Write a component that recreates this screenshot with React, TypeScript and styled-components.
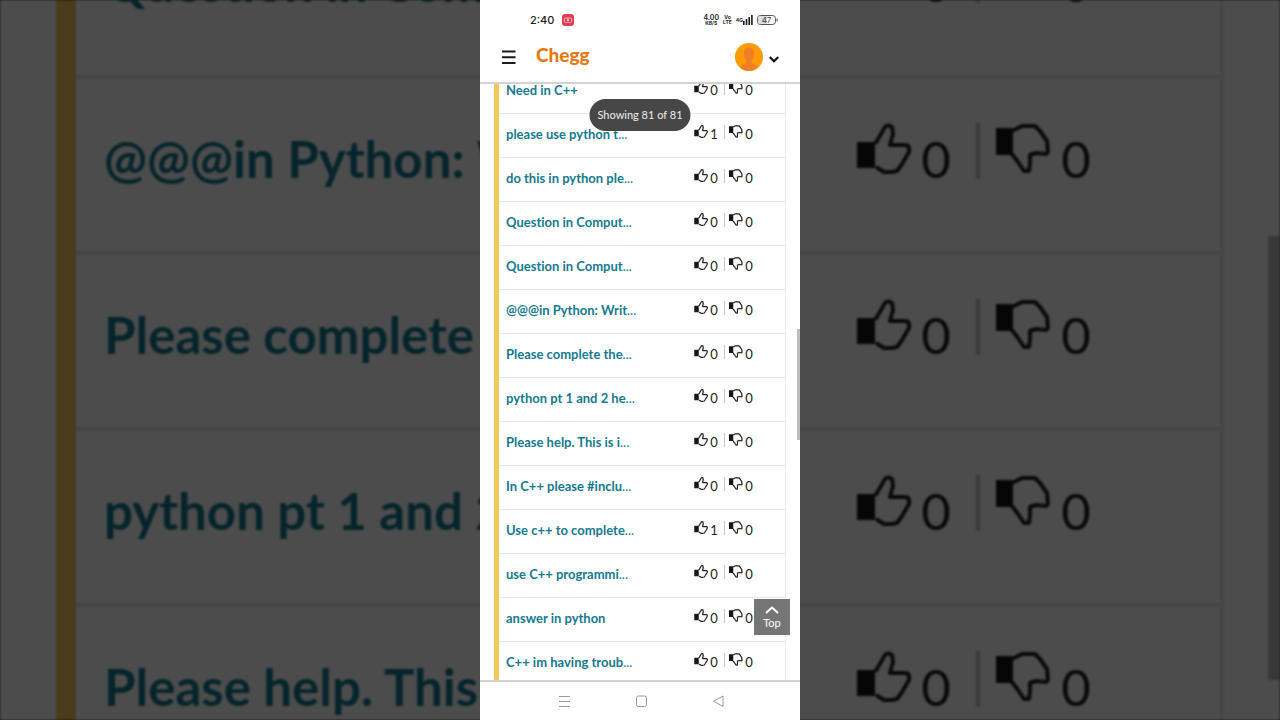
import React from "react";
import styled, { createGlobalStyle } from "styled-components";

const GlobalStyle = createGlobalStyle`
  *, *::before, *::after { box-sizing: border-box; }
  body { margin: 0; background: #4c4c4c; font-family: Lato, "Liberation Sans", sans-serif; font-variant-ligatures: none; }
  button { margin: 0; padding: 0; border: 0; background: none; color: inherit; font: inherit; cursor: pointer; }
  ul { margin: 0; padding: 0; list-style: none; }
  svg { display: block; flex: none; }
`;

type Scale = { $s: number };

const Stage = styled.div`
  position: relative;
  display: flex;
  justify-content: center;
  height: 100vh;
  overflow: hidden;
`;

const Backdrop = styled.div`
  position: absolute;
  inset: 0;
  overflow: hidden;
  background: #fff;
  filter: blur(1px);
`;

const Shade = styled.div`
  position: absolute;
  inset: 0;
  background: rgba(0, 0, 0, 0.7);
`;

const Phone = styled.main`
  position: relative;
  display: flex;
  flex-direction: column;
  width: 100%;
  max-width: 320px;
  height: 100%;
  background: #fff;
`;

const StatusBar = styled.div`
  display: flex;
  align-items: center;
  justify-content: space-between;
  height: 40px;
  padding: 0 22px 0 50px;
  color: #1c1c1c;
`;

const StatusGroup = styled.div<{ $gap: number }>`
  display: flex;
  align-items: center;
  gap: ${(p) => p.$gap}px;
`;

const Clock = styled.time`
  font: 500 11px/16px Inter, sans-serif;
`;

const Stacked = styled.span`
  display: flex;
  flex-direction: column;
  align-items: center;
  font: 700 5px/5px Inter, sans-serif;
`;

const Speed = styled.span`
  font: 600 7px/6px Inter, sans-serif;
`;

const Header = styled.header`
  display: flex;
  align-items: center;
  height: 44px;
  padding: 0 21px 8px 22px;
  border-bottom: 2px solid #d2d2d2;
`;

const Logo = styled.a`
  flex: 1;
  align-self: flex-start;
  margin-left: 20px;
  color: #e47911;
  font: 900 19px/30px Lato, sans-serif;
  text-decoration: none;
`;

const Account = styled.button`
  display: flex;
  align-items: center;
  gap: 6px;
`;

const Viewport = styled.section`
  position: relative;
  flex: 1;
  min-height: 0;
  overflow: hidden;
`;

const List = styled.ul<Scale & { $scrolled: number }>`
  margin: ${(p) => -p.$scrolled}px ${(p) => p.$s * 14}px 0;
  border-left: ${(p) => p.$s * 5}px solid #f2c85b;
  border-right: ${(p) => p.$s}px solid #ebebeb;
`;

const Item = styled.li<Scale>`
  display: flex;
  align-items: flex-start;
  height: ${(p) => p.$s * 44}px;
  padding: ${(p) => p.$s * 11}px ${(p) => p.$s * 32}px 0 ${(p) => p.$s * 7}px;
  border-bottom: ${(p) => p.$s}px solid #e2eaec;
  font-size: ${(p) => (p.$s === 1 ? 13 : 51)}px;
  line-height: ${(p) => p.$s * 18}px;
  white-space: nowrap;
`;

const Title = styled.a`
  flex: 1;
  color: #157a90;
  font-weight: 700;
  text-decoration: none;
`;

const Dots = styled.span`
  font-weight: 400;
`;

const Votes = styled.div<Scale>`
  display: flex;
  align-items: flex-start;
  gap: ${(p) => p.$s * 4}px;
  color: #222;
`;

const Vote = styled.button<Scale>`
  display: flex;
  align-items: flex-start;
  gap: ${(p) => p.$s * 2}px;
`;

const Count = styled.span<Scale>`
  width: ${(p) => p.$s * 8}px;
  text-align: center;
`;

const Divider = styled.span<Scale>`
  width: ${(p) => p.$s}px;
  height: ${(p) => p.$s * 14}px;
  margin-left: ${(p) => p.$s * 2}px;
  background: #c4c4c4;
`;

const Toast = styled.div`
  position: absolute;
  top: 15px;
  left: 50%;
  transform: translateX(-50%);
  padding: 8px;
  border-radius: 16px;
  background: rgba(64, 64, 64, 0.96);
  color: #eee;
  font-size: 11px;
  line-height: 16px;
  white-space: nowrap;
`;

const TopButton = styled.button`
  position: absolute;
  right: 10px;
  bottom: 45px;
  display: flex;
  flex-direction: column;
  align-items: center;
  gap: 1px;
  width: 36px;
  height: 36px;
  padding-top: 7px;
  background: #757575;
  color: #fff;
  font-size: 11px;
  line-height: 16px;
`;

const ScrollThumb = styled.div<Scale & { $top: number }>`
  position: absolute;
  top: ${(p) => p.$top}px;
  right: 0;
  width: ${(p) => p.$s * 3}px;
  height: ${(p) => p.$s * 111}px;
  background: #bdbdbd;
`;

const NavBar = styled.nav`
  display: flex;
  align-items: center;
  justify-content: center;
  gap: 62px;
  height: 40px;
  padding-left: 2px;
  border-top: 2px solid #d2d2d2;
  color: #9a9a9a;
`;

const ThumbUp = ({ s }: { s: number }) => (
  <svg width={14 * s} height={13 * s} viewBox="0 0 56 52" aria-hidden="true">
    <path d="M1 19H19V45H1Z" fill="#161616" />
    <path
      d="M19 21L25 11L29 4Q32 1 36 4L37 11L34 22H50Q54 23 53 29L46 41L41 48L36 49H28L20 44"
      fill="none" stroke="#222" strokeWidth={s === 1 ? 5 : 4} strokeLinejoin="round"
    />
  </svg>
);

const ThumbDown = ({ s }: { s: number }) => (
  <svg width={14 * s} height={13 * s} viewBox="0 0 56 52" aria-hidden="true">
    <path d="M0 5H17V32H0Z" fill="#161616" />
    <path
      d="M16 8L26 3H39L44 8L51 18L52 29L50 31L40 30L34 32V40L33 48H28L22 39L16 31"
      fill="none" stroke="#222" strokeWidth={s === 1 ? 5 : 4} strokeLinejoin="round"
    />
  </svg>
);

type Question = { title: string; cut?: boolean; up?: number };

const questions: Question[] = [
  { title: "Need in C++" },
  { title: "please use python t", cut: true, up: 1 },
  { title: "do this in python ple", cut: true },
  { title: "Question in Comput", cut: true },
  { title: "Question in Comput", cut: true },
  { title: "@@@in Python: Writ", cut: true },
  { title: "Please complete the", cut: true },
  { title: "python pt 1 and 2 he", cut: true },
  { title: "Please help. This is i", cut: true },
  { title: "In C++ please #inclu", cut: true },
  { title: "Use c++ to complete", cut: true, up: 1 },
  { title: "use C++ programmi", cut: true },
  { title: "answer in python" },
  { title: "C++ im having troub", cut: true },
];

function QuestionRow({ q, s, decorative }: { q: Question; s: number; decorative?: boolean }) {
  const plain = decorative ? "span" : undefined;
  return (
    <Item $s={s}>
      <Title as={plain} href={decorative ? undefined : "#question"}>
        {q.title}
        {q.cut && <Dots>...</Dots>}
      </Title>
      <Votes $s={s}>
        <Vote as={plain} $s={s} aria-label={decorative ? undefined : "Helpful"}>
          <ThumbUp s={s} />
          <Count $s={s}>{q.up ?? 0}</Count>
        </Vote>
        <Divider $s={s} />
        <Vote as={plain} $s={s} aria-label={decorative ? undefined : "Not helpful"}>
          <ThumbDown s={s} />
          <Count $s={s}>0</Count>
        </Vote>
      </Votes>
    </Item>
  );
}

export default function App() {
  return (
    <Stage>
      <GlobalStyle />
      <Backdrop aria-hidden="true">
        <List $s={4} $scrolled={97}>
          {questions.slice(4, 9).map((q, i) => (
            <QuestionRow key={i} q={q} s={4} decorative />
          ))}
        </List>
        <ScrollThumb $s={4} $top={236} />
      </Backdrop>
      <Shade />

      <Phone>
        <StatusBar>
          <StatusGroup $gap={8}>
            <Clock>2:40</Clock>
            <svg width="12" height="12" viewBox="0 0 12 12" aria-label="Recording">
              <rect width="12" height="12" rx="3" fill="#e23b55" />
              <rect x="2.5" y="4" width="7" height="4.5" rx="1" fill="none" stroke="#fbd5da" strokeWidth="0.8" />
              <circle cx="6" cy="6.2" r="1.1" fill="#fbd5da" />
            </svg>
          </StatusGroup>
          <StatusGroup $gap={4}>
            <Stacked>
              <Speed>4.00</Speed>
              <span>KB/S</span>
            </Stacked>
            <Stacked>
              <span>Vo</span>
              <span>LTE</span>
            </Stacked>
            <StatusGroup $gap={0}>
              <Stacked>4G</Stacked>
              <svg width="10" height="10" viewBox="0 0 10 10" fill="#1c1c1c" aria-label="Signal">
                <path d="M0 6h1.6v4H0zM2.7 4h1.6v6H2.7zM5.4 2H7v8H5.4zM8.1 0h1.6v10H8.1z" />
              </svg>
            </StatusGroup>
            <svg width="21" height="10" viewBox="0 0 21 10" aria-label="Battery 47">
              <rect x="0.5" y="0.5" width="18" height="9" rx="3" fill="#fff" stroke="#555" />
              <path d="M3 1h7v8H3Q1 9 1 7V3Q1 1 3 1Z" fill="#ddd" />
              <path d="M20 3.5v3" stroke="#555" />
              <text x="9.5" y="7.8" textAnchor="middle" fontSize="8" fontFamily="Inter, sans-serif" fill="#333">47</text>
            </svg>
          </StatusGroup>
        </StatusBar>

        <Header>
          <button aria-label="Menu">
            <svg width="14" height="14" viewBox="0 0 14 14">
              <path d="M0 1.5h13.5M0 7.2h13.5M0 13h13.5" stroke="#1a1a1a" strokeWidth="2" />
            </svg>
          </button>
          <Logo href="#home">Chegg</Logo>
          <Account aria-label="Account">
            <svg width="28" height="28" viewBox="0 0 28 28">
              <circle cx="14" cy="14" r="14" fill="#fc9b06" />
              <path d="M9 9Q9 4.500 14 4.500T19 9V12Q19 16 16.500 18V20Q20 21 23 24.500Q19 28 14 28T5 24.500Q8 21 11.500 20V18Q9 16 9 12Z" fill="#ee7f27" />
            </svg>
            <svg width="10" height="12" viewBox="0 0 10 12">
              <path d="M0.700 6L5 10.200L9.300 6" fill="none" stroke="#111" strokeWidth="2.200" />
            </svg>
          </Account>
        </Header>

        <Viewport>
          <List $s={1} $scrolled={14}>
            {questions.map((q, i) => (
              <QuestionRow key={i} q={q} s={1} />
            ))}
          </List>
          <Toast role="status">Showing 81 of 81</Toast>
          <TopButton>
            <svg width="14" height="8" viewBox="0 0 14 8">
              <path d="M1 7L7 1.500L13 7" fill="none" stroke="#fff" strokeWidth="2" />
            </svg>
            Top
          </TopButton>
          <ScrollThumb $s={1} $top={245} />
        </Viewport>

        <NavBar>
          <button aria-label="Recent apps">
            <svg width="15" height="14" viewBox="0 0 15 14" fill="none" stroke="currentColor">
              <path d="M2 2.500h11M2 7.500h11M2 12.500h11" />
            </svg>
          </button>
          <button aria-label="Home">
            <svg width="15" height="14" viewBox="0 0 15 14" fill="none" stroke="currentColor">
              <rect x="2.500" y="2" width="10" height="10.500" rx="2" />
            </svg>
          </button>
          <button aria-label="Back">
            <svg width="15" height="14" viewBox="0 0 15 14" fill="none" stroke="currentColor" strokeLinejoin="round">
              <path d="M12 2L2.500 7.200L12 12.500Z" />
            </svg>
          </button>
        </NavBar>
      </Phone>
    </Stage>
  );
}
